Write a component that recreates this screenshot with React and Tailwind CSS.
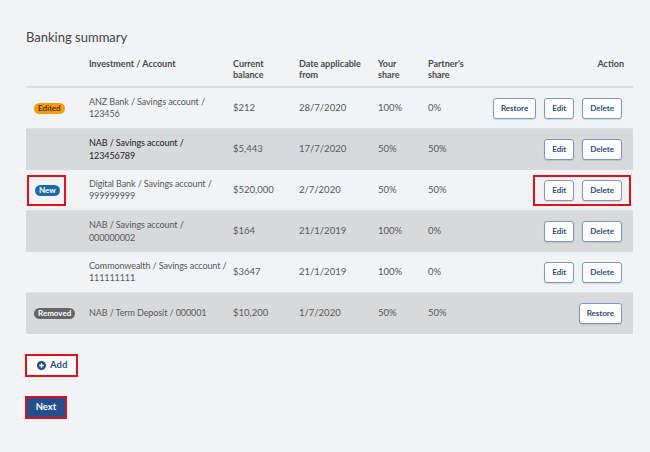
import React from "react";

const rows = [
  {
    status: "edited",
    account: ["ANZ Bank / Savings account /", "123456"],
    balance: "$212",
    date: "28/7/2020",
    yours: "100%",
    partner: "0%",
    actions: ["Restore", "Edit", "Delete"],
  },
  {
    account: ["NAB / Savings account /", "123456789"],
    dark: true,
    balance: "$5,443",
    date: "17/7/2020",
    yours: "50%",
    partner: "50%",
    actions: ["Edit", "Delete"],
  },
  {
    status: "new",
    account: ["Digital Bank / Savings account /", "999999999"],
    balance: "$520,000",
    date: "2/7/2020",
    yours: "50%",
    partner: "50%",
    actions: ["Edit", "Delete"],
    highlight: true,
  },
  {
    account: ["NAB / Savings account /", "000000002"],
    balance: "$164",
    date: "21/1/2019",
    yours: "100%",
    partner: "0%",
    actions: ["Edit", "Delete"],
  },
  {
    account: ["Commonwealth / Savings account /", "111111111"],
    balance: "$3647",
    date: "21/1/2019",
    yours: "100%",
    partner: "0%",
    actions: ["Edit", "Delete"],
  },
  {
    status: "removed",
    account: ["NAB / Term Deposit / 000001"],
    balance: "$10,200",
    date: "1/7/2020",
    yours: "50%",
    partner: "50%",
    actions: ["Restore"],
  },
];

const Badge = ({ status }) => {
  if (status === "edited")
    return (
      <span className="inline-block rounded-full bg-[#f49a0e] px-[4px] text-[8px] leading-[11px] font-semibold text-[#3a2a10]">
        Edited
      </span>
    );
  if (status === "new")
    return (
      <span className="inline-block rounded-full bg-[#1c6aa3] px-[4px] text-[8px] leading-[11px] font-bold text-white">
        New
      </span>
    );
  if (status === "removed")
    return (
      <span className="inline-block rounded-full bg-[#666] px-[4px] text-[8px] leading-[11px] font-bold text-white">
        Removed
      </span>
    );
  return null;
};

const ActionButton = ({ label }) => (
  <button className="h-[21px] rounded-[3px] border border-[#7e97c2] bg-white px-[7px] text-[8px] font-bold text-[#2c4c80] shadow-[0_1px_1px_rgba(0,0,0,0.12)]">
    {label}
  </button>
);

export default function App() {
  return (
    <div
      className="min-h-[452px] w-[650px] bg-[#f2f3f5] pl-[26px] pt-[28px] text-[#585858]"
      style={{ fontFamily: 'Lato, "Open Sans", sans-serif' }}
    >
      <h2 className="text-[13px] leading-[18px] text-[#444]">Banking summary</h2>

      <div className="mt-[9px] w-[607px]">
        {/* Header */}
        <div className="flex h-[33px] items-start border-b-2 border-[#dcdde0] pt-[3px] text-[9px] leading-[11px] font-bold text-[#4a4a4a]">
          <div className="w-[63px]" />
          <div className="w-[144px]">Investment / Account</div>
          <div className="w-[66px]">
            Current
            <br />
            balance
          </div>
          <div className="w-[79px]">
            Date applicable
            <br />
            from
          </div>
          <div className="w-[50px]">
            Your
            <br />
            share
          </div>
          <div className="w-[52px]">
            Partner's
            <br />
            share
          </div>
          <div className="flex-1 pr-[9px] text-right">Action</div>
        </div>

        {/* Rows */}
        {rows.map((r, i) => (
          <div
            key={i}
            className={`flex h-[41px] items-center text-[9.5px] leading-[12.5px] ${
              i % 2 === 1 ? "bg-[#d8d9db]" : "bg-[#f2f3f5] border-b border-[#e2e3e6]"
            }`}
          >
            <div className="flex w-[63px] items-center">
              {r.highlight ? (
                <div className="ml-[1px] flex h-[31px] w-[39px] items-center border-2 border-[#e3101b] pl-[6px]">
                  <Badge status={r.status} />
                </div>
              ) : (
                <div className="pl-[8px]">
                  <Badge status={r.status} />
                </div>
              )}
            </div>
            <div
              className={`w-[144px] whitespace-nowrap text-[9px] tracking-[-0.1px] ${
                r.dark ? "text-[#222]" : ""
              }`}
            >
              {r.account[0]}
              {r.account[1] && (
                <>
                  <br />
                  {r.account[1]}
                </>
              )}
            </div>
            <div className="w-[66px]">{r.balance}</div>
            <div className="w-[79px]">{r.date}</div>
            <div className="w-[50px]">{r.yours}</div>
            <div className="w-[52px]">{r.partner}</div>
            <div className="flex flex-1 justify-end pr-[11px]">
              {r.highlight ? (
                <div className="-mr-[9px] flex h-[31px] items-center gap-[8px] border-2 border-[#e3101b] pl-[9px] pr-[7px]">
                  {r.actions.map((a) => (
                    <ActionButton key={a} label={a} />
                  ))}
                </div>
              ) : (
                <div className="flex items-center gap-[8px]">
                  {r.actions.map((a) => (
                    <ActionButton key={a} label={a} />
                  ))}
                </div>
              )}
            </div>
          </div>
        ))}
      </div>

      {/* Add */}
      <div className="mt-[20px] -ml-[1px] flex h-[23px] w-[53px] items-center border-2 border-[#e3101b] bg-white pl-[10px]">
        <svg width="9" height="9" viewBox="0 0 16 16" className="mr-[4px]">
          <circle cx="8" cy="8" r="8" fill="#1f4e8c" />
          <path d="M8 4v8M4 8h8" stroke="white" strokeWidth="2.4" />
        </svg>
        <span className="text-[9.5px] font-bold text-[#1f4e8c]">Add</span>
      </div>

      {/* Next */}
      <div className="mt-[19px] -ml-[1px] flex">
        <div className="flex border-2 border-[#e3101b]">
          <button className="h-[19px] w-[38px] bg-[#22508f] text-[9.5px] font-bold text-white">
            Next
          </button>
        </div>
      </div>
    </div>
  );
}
